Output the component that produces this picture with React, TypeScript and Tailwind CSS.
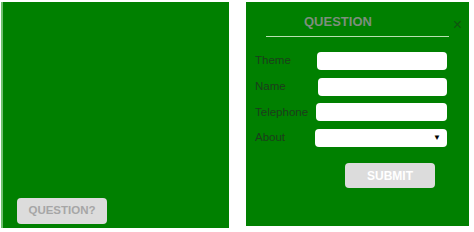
import React from 'react';

const fields = [
  { label: 'Theme', offset: 'ml-[2px]' },
  { label: 'Name', offset: 'ml-[3px]' },
  { label: 'Telephone', offset: 'ml-[1px]' },
];

export default function App() {
  return (
    <div className="w-[474px] h-[232px] bg-white flex items-start pt-[2px] pl-[1px] font-['Liberation_Sans',Arial,sans-serif]">
      {/* Left panel */}
      <div className="w-[228px] h-[226px] bg-[#008000] border-l-2 border-[#6fbf6f] flex flex-col justify-end pl-[14px] pb-[4px]">
        <button className="w-[90px] h-[26px] rounded-[4px] bg-[#dcdcdc] text-[#a6a6a6] text-[11.5px] font-bold">
          QUESTION?
        </button>
      </div>

      {/* Right panel */}
      <div className="ml-[17px] w-[223px] h-[224px] bg-[#008000] flex flex-col relative">
        <div className="h-[34px] mx-[20px] mt-[1px] border-b border-[#b8e0b0] flex items-center">
          <span className="ml-[38px] text-[13px] font-bold text-[#7c8f7c] mt-[4px]">QUESTION</span>
        </div>
        <span className="absolute right-[7px] top-[15px] text-[16px] leading-none text-[#0f560f]">×</span>

        <div className="flex flex-col gap-[7.6px] mt-[15px] pl-[9px] pr-[22px]">
          {fields.map((f) => (
            <div key={f.label} className="flex items-center h-[18px]">
              <span className="w-[60px] text-[11.5px] text-[#1c3d1c]">{f.label}</span>
              <div className={`flex-1 h-[18px] bg-white rounded-[4px] ${f.offset}`} />
            </div>
          ))}
          <div className="flex items-center h-[18px]">
            <span className="w-[60px] text-[11.5px] text-[#1c3d1c]">About</span>
            <div className="flex-1 h-[18px] bg-white rounded-[4px] flex items-center justify-end pr-[6px]">
              <span className="text-[8px] text-black">▼</span>
            </div>
          </div>
        </div>

        <div className="mt-[16px] pl-[99px]">
          <button className="w-[90px] h-[25px] rounded-[4px] bg-[#dcdcdc] text-white text-[12px] font-bold">
            SUBMIT
          </button>
        </div>
      </div>
    </div>
  );
}
